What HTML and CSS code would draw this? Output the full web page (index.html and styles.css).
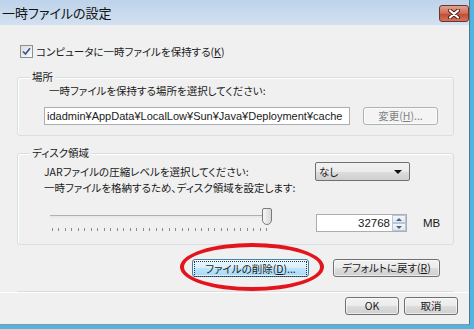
FILE: index.html
```html
<!DOCTYPE html>
<html lang="ja">
<head>
  <meta charset="UTF-8" />
  <title>一時ファイルの設定</title>
  <link rel="stylesheet" href="styles.css">
</head>
<body>

<div class="window">
  <!-- タイトルバー -->
  <div class="titlebar">
    <span class="title">一時ファイルの設定</span>
    <button class="close" type="button">
      <svg width="14" height="10" viewBox="0 0 14 10">
        <path d="M3 1.5 L11 8.5 M11 1.5 L3 8.5" stroke="#4a1a12" stroke-width="4" stroke-linecap="round"/>
        <path d="M3 1.5 L11 8.5 M11 1.5 L3 8.5" stroke="#fff" stroke-width="2.2" stroke-linecap="round"/>
      </svg>
    </button>
  </div>

  <div class="content">
    <label class="check">
      <span class="checkbox">
        <svg width="9" height="9" viewBox="0 0 9 9">
          <path d="M1 4.5 L3.5 7 L8 1.2" fill="none" stroke="#3b5494" stroke-width="1.7"/>
        </svg>
      </span>
      コンピュータに一時ファイルを保持する(<u>K</u>)
    </label>

    <!-- 場所 -->
    <div class="group place">
      <div class="group-title">場所</div>
      <div class="line indent">一時ファイルを保持する場所を選択してください:</div>
      <div class="place-row">
        <div class="path">idadmin¥AppData¥LocalLow¥Sun¥Java¥Deployment¥cache</div>
        <button class="btn disabled" type="button">変更(<u>H</u>)...</button>
      </div>
    </div>

    <!-- ディスク領域 -->
    <div class="group disk">
      <div class="group-title">ディスク領域</div>
      <div class="disk-grid">
        <div class="line">JARファイルの圧縮レベルを選択してください:</div>
        <div class="select">
          <span>なし</span>
          <span class="arrow"></span>
        </div>
        <div class="line wide">一時ファイルを格納するため、ディスク領域を設定します:</div>
        <div class="slider">
          <div class="track"></div>
          <div class="thumb"></div>
          <div class="ticks"></div>
        </div>
        <div class="spinner">
          <span class="value">32768</span>
          <span class="spin">
            <span class="up"></span>
            <span class="down"></span>
          </span>
        </div>
        <div class="unit">MB</div>
      </div>
    </div>

    <div class="actions">
      <button class="btn focused" type="button"><span class="focus">ファイルの削除(<u>D</u>)...</span></button>
      <button class="btn" type="button">デフォルトに戻す(<u>R</u>)</button>
      <div class="mark"></div>
    </div>
  </div>

  <div class="footer">
    <button class="btn small" type="button">OK</button>
    <button class="btn small" type="button">取消</button>
  </div>
</div>

</body>
</html>
```

FILE: styles.css
```css
body {
  margin: 0;
  background: #4db6e0;
  font-family: "Noto Sans CJK JP", "Liberation Sans", sans-serif;
  font-size: 10.5px;
  font-feature-settings: "palt";
  color: #1a1a1a;
  width: 474px;
  height: 329px;
  overflow: hidden;
}

.window {
  width: 469px;
  height: 324px;
  background: #f0f0f0;
  border-right: 1px solid #5f7286;
  border-bottom: 1px solid #8797a6;
}

.titlebar {
  height: 25px;
  display: flex;
  align-items: center;
  justify-content: space-between;
  background: linear-gradient(#bdd3ea, #d2e1f1);
  padding-left: 2px;
}

.title {
  font-size: 13px;
  color: #111;
}

.close {
  align-self: flex-start;
  width: 30px;
  height: 17px;
  margin-top: 5px;
  padding: 0;
  border: 1px solid #6e3328;
  border-radius: 3px;
  background: linear-gradient(#e2a193, #cf6a52 50%, #c04a30 51%, #d0755c);
  display: flex;
  align-items: center;
  justify-content: center;
}

.content {
  padding: 0 15px 0 17px;
}

.check {
  display: flex;
  align-items: center;
  height: 13px;
  margin-top: 20px;
  padding-left: 3px;
  line-height: 13px;
}

.checkbox {
  width: 11px;
  height: 11px;
  border: 1px solid #8e8f8f;
  background: linear-gradient(135deg, #dcdcdc, #fbfbfb);
  display: flex;
  align-items: center;
  justify-content: center;
  margin-right: 3px;
}

.group {
  border: 1px solid #d5dfe5;
  border-radius: 3px;
  box-shadow: inset 1px 1px 0 #fff;
  padding: 0 15px 10px 26px;
}

.group-title {
  width: fit-content;
  margin: -8px 0 0 -14px;
  padding: 0 2px;
  background: #f0f0f0;
  line-height: 14px;
}

.place {
  margin-top: 19px;
}

.line {
  line-height: 14px;
  white-space: nowrap;
}

.indent {
  padding-left: 5px;
}

.place-row {
  display: flex;
  justify-content: space-between;
  margin-top: 9px;
}

.path {
  width: 302px;
  height: 16px;
  border: 1px solid #abadb3;
  background: #fff;
  line-height: 16px;
  padding-left: 2px;
  overflow: hidden;
  white-space: nowrap;
  font-family: "Liberation Sans", sans-serif;
  font-size: 11px;
  font-feature-settings: normal;
}

.btn {
  height: 18px;
  padding: 0;
  border: 1px solid #707070;
  border-radius: 3px;
  background: linear-gradient(#f2f2f2, #ebebeb 50%, #dddddd 51%, #cfcfcf);
  font-family: inherit;
  font-size: 10.5px;
  font-feature-settings: "palt";
  color: #1a1a1a;
  line-height: 14px;
  white-space: nowrap;
  box-shadow: inset 0 0 0 1px rgba(255,255,255,0.6);
}

.btn.disabled {
  width: 75px;
  border-color: #adb2b5;
  background: #f4f4f4;
  color: #838383;
}

.disk {
  margin-top: 17px;
  padding-bottom: 11px;
}

.disk-grid {
  display: grid;
  grid-template-columns: 271px 96px 1fr;
  align-items: start;
  padding-top: 2px;
}

.disk-grid > .line:first-child {
  align-self: center;
}

.wide {
  grid-column: 1 / 4;
}

.select {
  width: 95px;
  height: 19px;
  box-sizing: border-box;
  border: 1px solid #707070;
  border-radius: 2px;
  background: linear-gradient(#f2f2f2, #ebebeb 50%, #dddddd 51%, #cfcfcf);
  display: flex;
  align-items: center;
  justify-content: space-between;
  padding: 0 7px 0 3px;
}

.arrow {
  width: 0;
  height: 0;
  border-left: 4px solid transparent;
  border-right: 4px solid transparent;
  border-top: 4px solid #111;
}

.slider {
  position: relative;
  height: 25px;
  margin-top: 13px;
  margin-left: 6px;
  width: 222px;
}

.track {
  position: absolute;
  left: 0;
  right: 0;
  top: 7px;
  height: 2px;
  border-top: 1px solid #b0b0b0;
  background: #e7eaea;
}

.thumb {
  position: absolute;
  left: 212px;
  top: 0;
  width: 8px;
  height: 15px;
  border: 1px solid #7a7a7a;
  border-radius: 2px 2px 5px 5px;
  background: linear-gradient(90deg, #f6f6f6, #d8d8d8);
}

.ticks {
  position: absolute;
  left: 2px;
  right: 4px;
  top: 20px;
  height: 3px;
  background: repeating-linear-gradient(90deg, #8a8a8a 0 1px, transparent 1px 6.5px);
}

.spinner {
  margin-top: 19px;
  margin-left: 1px;
  width: 91px;
  height: 18px;
  box-sizing: border-box;
  border: 1px solid #abadb3;
  background: #fff;
  display: flex;
  justify-content: flex-end;
  align-items: center;
}

.value {
  padding-right: 2px;
  font-family: "Liberation Sans", sans-serif;
  font-size: 11.5px;
}

.spin {
  width: 14px;
  height: 16px;
  display: flex;
  flex-direction: column;
}

.spin span {
  flex: 1;
  border: 1px solid #b9c6d5;
  background: linear-gradient(#f3f7fb, #dfe8f2);
  display: flex;
  align-items: center;
  justify-content: center;
}

.spin .up::after,
.spin .down::after {
  content: "";
  border-left: 3px solid transparent;
  border-right: 3px solid transparent;
}

.spin .up::after {
  border-bottom: 3px solid #4d6185;
}

.spin .down::after {
  border-top: 3px solid #4d6185;
}

.unit {
  margin-top: 19px;
  padding-left: 12px;
  line-height: 18px;
  font-family: "Liberation Sans", sans-serif;
  font-size: 11.5px;
}

.actions {
  position: relative;
  display: flex;
  justify-content: flex-end;
  gap: 24px;
  margin-top: 14px;
  padding-right: 14px;
  padding-bottom: 14px;
  border-bottom: 1px solid #dcdcdc;
}

.actions .btn {
  width: 107px;
}

.actions .btn.focused {
  width: 117px;
  border-color: #3c7fb1;
  background: linear-gradient(#eaf6fd, #d9f0fc 50%, #bee6fd 51%, #a7d9f5);
  padding: 1px;
}

.focus {
  display: block;
  height: 14px;
  border: 1px dotted #333;
  line-height: 14px;
}

.mark {
  position: absolute;
  left: 163px;
  top: -16px;
  width: 136px;
  height: 40px;
  border: 4px solid #e3141c;
  border-radius: 50%;
}

.footer {
  border-top: 1px solid #fff;
  display: flex;
  justify-content: flex-end;
  gap: 5px;
  padding: 4px 11px 0 0;
}

.btn.small {
  width: 54px;
}
```
